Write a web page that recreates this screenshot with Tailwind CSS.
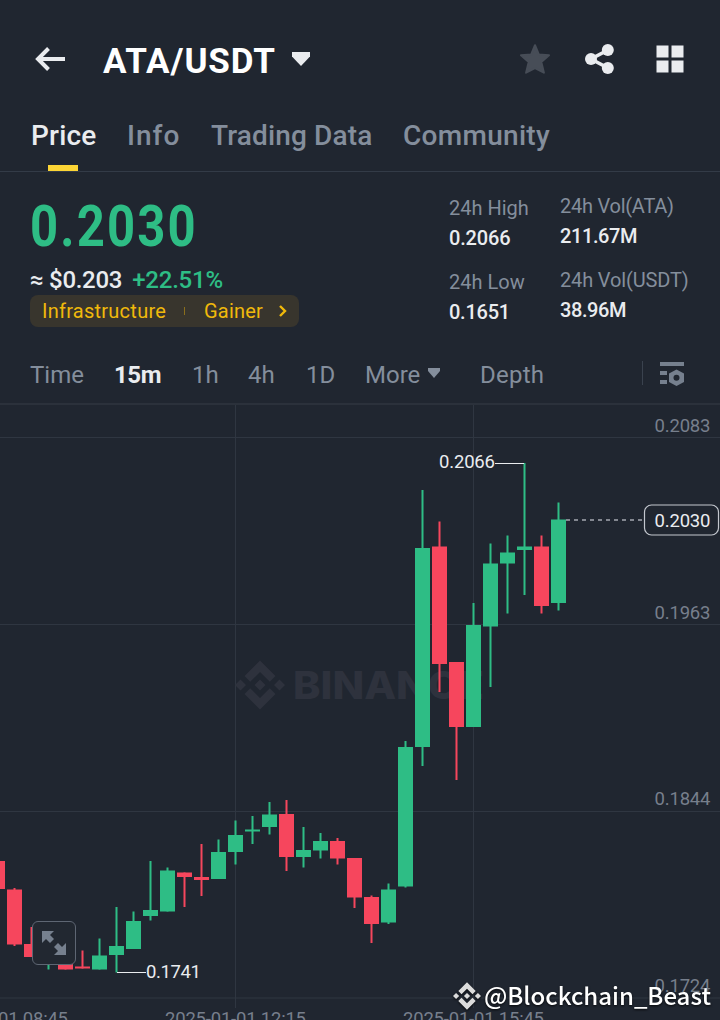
<!DOCTYPE html>
<html lang="en">
	<head>
		<meta charset="utf-8" />
		<title>ATA/USDT</title>
		<meta name="viewport" content="width=device-width, initial-scale=1.0" />
		<script src="https://cdn.jsdelivr.net/npm/@tailwindcss/browser@4"></script>
	</head>
	<body
		class="w-[720px] h-[1020px] overflow-hidden bg-[#202630] font-['Roboto',sans-serif] text-[#848e9c] whitespace-nowrap"
	>
		<header class="flex items-center h-[118px] pl-[35px] pr-9">
			<svg class="w-[30px] h-6" viewBox="0 0 30 24" fill="none" stroke="#eaecef" stroke-width="4">
				<path d="M30 12H4M13.500 1.500L3 12l10.500 10.500" />
			</svg>
			<h1 class="ml-[38px] mt-[5px] w-[172px] text-[35px] leading-none font-bold text-white tracking-[0.900px]">ATA/USDT</h1>
			<svg class="ml-[17px] w-[18px] h-[14px]" viewBox="0 0 18 14" fill="#eaecef">
				<path d="M0 0h18v4.500L9 14 0 4.500z" />
			</svg>
			<svg class="ml-auto w-[30px] h-[30px]" viewBox="0 0 30 30" fill="#474d57" stroke="#474d57" stroke-width="2" stroke-linejoin="round">
				<path d="M15 1.200l3.800 9.300 10.200.7-7.700 6.700 2.600 10.800L15 24.200l-8.900 4.500 2.600-10.800L1 11.200l10.200-.7z" />
			</svg>
			<svg class="ml-[35px] w-[29px] h-[30px]" viewBox="0 0 29 30" fill="#eaecef">
				<path d="M23 6L6 15l17 9" fill="none" stroke="#eaecef" stroke-width="3.600" />
				<circle cx="22.800" cy="6" r="6" />
				<circle cx="6" cy="15" r="6" />
				<circle cx="22.800" cy="24" r="6" />
			</svg>
			<svg class="ml-[42px] w-[28px] h-[28px]" viewBox="0 0 28 28" fill="#eaecef">
				<path d="M.500.500h12v12h-12zM15.500.500h12v12h-12zM.500 15.500h12v12h-12zM15.500 15.500h12v12h-12z" />
			</svg>
		</header>

		<nav class="flex h-[54px] pt-px pl-[31px] border-b border-[#333b47] text-[28px] leading-[34px] font-medium">
			<div class="relative w-[96px] text-[#eaecef] tracking-[0.200px]">
				Price
				<div class="absolute left-[17px] bottom-0 w-[30px] h-1.5 bg-[#fcd535]"></div>
			</div>
			<div class="w-[84px] tracking-[1px]">Info</div>
			<div class="w-[192px] tracking-[0.150px]">Trading Data</div>
			<div class="tracking-[0.300px]">Community</div>
		</nav>

		<section class="flex h-[167px] pl-[30px]">
			<div class="w-[419px] pt-[26px]">
				<div class="origin-left scale-x-[0.86] text-[57px] leading-[58px] font-bold text-[#2ebd85] tracking-[2.500px]">0.2030</div>
				<div class="flex gap-[10px] mt-[11px] h-7 text-2xl leading-[27px] font-medium text-[#eaecef]">
					<span class="tracking-[-0.300px]">≈ $0.203</span>
					<span class="text-[#2ebd85] tracking-[-0.200px]">+22.51%</span>
				</div>
				<div class="flex items-center w-[269px] h-8 pl-3 rounded-lg bg-[#38352d] text-xl text-[#f0b90b]">
					<span class="w-[142px] tracking-[0.250px]">Infrastructure</span>
					<span class="w-px h-2 bg-[#8a6e1c]"></span>
					<span class="ml-[19px] w-[59px] tracking-[0.200px]">Gainer</span>
					<svg class="ml-4 w-2 h-3" viewBox="0 0 8 12" fill="none" stroke="#f0b90b" stroke-width="2.400">
						<path d="M1 1l5 5-5 5" />
					</svg>
				</div>
			</div>
			<div class="w-[111px] pt-6 text-xl leading-6">
				<div>24h High</div>
				<div class="mt-1.5 font-medium text-[#eaecef] tracking-[-0.150px]">0.2066</div>
				<div class="mt-5">24h Low</div>
				<div class="mt-1.5 font-medium text-[#eaecef] tracking-[-0.250px]">0.1651</div>
			</div>
			<div class="pt-[22px] text-xl leading-6">
				<div class="tracking-[-0.250px]">24h Vol(ATA)</div>
				<div class="mt-1.5 font-medium text-[#eaecef] tracking-[-0.400px]">211.67M</div>
				<div class="mt-5 tracking-[-0.150px]">24h Vol(USDT)</div>
				<div class="mt-1.5 font-medium text-[#eaecef] tracking-[-0.400px]">38.96M</div>
			</div>
		</section>

		<div class="flex items-center h-[66px] pl-[30px] pt-2 border-b-2 border-[#2b313b] text-2xl">
			<span class="w-[84px]">Time</span>
			<span class="w-[78px] font-bold text-[#eaecef] tracking-[-0.400px]">15m</span>
			<span class="w-[56px]">1h</span>
			<span class="w-[58px]">4h</span>
			<span class="w-[59px]">1D</span>
			<span class="w-[63px]">More</span>
			<svg class="w-3 h-[10px] -mt-1" viewBox="0 0 12 10" fill="#848e9c"><path d="M0 0h12v3L6 10 0 3z" /></svg>
			<span class="ml-10 w-[162px] tracking-[0.250px]">Depth</span>
			<span class="w-px h-6 -mt-1 bg-[#3a424e]"></span>
			<svg class="ml-[17px] w-6 h-6 -mt-0.5" viewBox="0 0 24 24" fill="#76808e">
				<path d="M0 0h24v4H0zM0 9h7v4H0zM0 18h7v4H0z" />
				<path fill-rule="evenodd" d="M16.500 7.500l7.500 4v8.500l-7.500 4-7.500-4v-8.500zM16.500 12.800a3 3 0 100 6 3 3 0 000-6z" />
			</svg>
		</div>

		<main class="relative h-[615px]">
			<svg class="block w-[720px] h-[615px]" viewBox="0 405 720 615">
				<g stroke="#2f3641" stroke-width="1">
					<path d="M0 437.500h720M0 624.500h720M0 811.500h720M0 998h720" />
					<path d="M235.500 405v603M473.500 405v603" />
				</g>
				<g fill="#2e323d">
					<path d="M260 660.500l15.500 15.500-5.700 5.700-9.800-9.800-9.800 9.800-5.700-5.700zM260 709.500l15.500-15.500-5.700-5.700-9.800 9.800-9.800-9.800-5.700 5.700zM260 679.500l5.500 5.500-5.500 5.500-5.500-5.500zM240.500 679.500l5.500 5.500-5.500 5.500-5.500-5.500zM279.500 679.500l5.500 5.500-5.500 5.500-5.500-5.500z" />
					<text x="293" y="699" font-size="38" font-weight="800" font-family="Inter" textLength="191" lengthAdjust="spacingAndGlyphs">BINANCE</text>
				</g>
				<g id="candles"></g>
				<path d="M566 520h78" stroke="#a4a8b0" stroke-width="1.300" stroke-dasharray="4 4" />
				<path d="M495 463.500h29M117 972.500h29" stroke="#eaecef" stroke-width="1.200" />
				<g font-size="18.500" fill="#eaecef">
					<text x="439" y="468" textLength="56">0.2066</text>
					<text x="146" y="978" textLength="55">0.1741</text>
				</g>
				<rect x="644.500" y="505" width="74" height="30" rx="7" fill="#202630" stroke="#c3c7ce" stroke-width="1.200" />
				<text x="654.500" y="527" font-size="18.500" fill="#eaecef" textLength="56">0.2030</text>
				<g font-size="18.500" fill="#777f8c">
					<text x="654.500" y="432" textLength="56">0.2083</text>
					<text x="654.500" y="619" textLength="56">0.1963</text>
					<text x="654.500" y="805" textLength="56">0.1844</text>
					<text x="654.500" y="992" textLength="56">0.1724</text>
					<text x="-73" y="1025" textLength="141">2025-01-01 08:45</text>
					<text x="165" y="1025" textLength="141">2025-01-01 12:15</text>
					<text x="403" y="1025" textLength="141">2025-01-01 15:45</text>
				</g>
			</svg>

			<button class="absolute left-8 top-[516px] flex items-center justify-center size-11 rounded-md border border-[#5e6673] bg-[#222831]">
				<svg class="size-6" viewBox="0 0 24 24" fill="#76808e">
					<path d="M0 0h12L8 4l4 4-4 4-4-4-4 4zM24 24H12l4-4-4-4 4-4 4 4 4-4z" />
				</svg>
			</button>

			<div class="absolute left-[453px] top-[575px] flex items-center gap-[3px] h-8 text-white drop-shadow-[0_1px_1px_rgba(0,0,0,0.8)]">
				<svg class="size-7" viewBox="235 660 50 50" fill="#dcdcdc">
					<path d="M260 660.500l15.500 15.500-5.700 5.700-9.800-9.800-9.800 9.800-5.700-5.700zM260 709.500l15.500-15.500-5.700-5.700-9.800 9.800-9.800-9.800-5.700 5.700zM260 679.500l5.500 5.500-5.500 5.500-5.500-5.500zM240.500 679.500l5.500 5.500-5.500 5.500-5.500-5.500zM279.500 679.500l5.500 5.500-5.500 5.500-5.500-5.500z" />
				</svg>
				<span class="-mt-[3px] font-['Noto_Sans_CJK_SC',sans-serif] text-2xl leading-8 font-medium">@Blockchain_Beast</span>
			</div>
		</main>

		<script>
			// [rising, body top, body bottom, wick top, wick bottom]
			const candles = [
				[0, 861, 889, 861, 889],
				[0, 889.5, 944.5, 888, 946],
				[0, 944, 957, 927, 957],
				[1, 957, 963, 950, 969.5],
				[0, 958, 969.5, 958, 969.5],
				[0, 966.5, 968.5, 950.5, 968.5],
				[1, 955.5, 969.5, 938.5, 969.5],
				[1, 946, 955, 907, 972.5],
				[1, 921, 949, 911.5, 949],
				[1, 910, 916, 861, 920.5],
				[1, 870.5, 911.5, 867.5, 911.5],
				[0, 872.5, 877, 872.5, 907],
				[0, 877, 880, 844, 896],
				[1, 852, 879, 839.5, 879],
				[1, 835, 852, 820.5, 864.5],
				[1, 829.5, 831.5, 816, 844],
				[1, 814.5, 827, 802, 834.5],
				[0, 814, 857, 800, 871],
				[1, 850, 857, 827, 867.5],
				[1, 841, 850.5, 833, 858.5],
				[0, 841, 858.5, 838, 864.5],
				[0, 858, 897.5, 858, 908],
				[0, 897, 924, 895.5, 943],
				[1, 889.5, 922.5, 883.5, 924],
				[1, 747, 886.5, 741, 887.5],
				[1, 548, 747, 490, 766],
				[0, 546.5, 664, 521.5, 692],
				[0, 662, 727, 662, 780],
				[1, 625, 727, 603, 727],
				[1, 563.5, 626.5, 543.5, 687],
				[1, 552.5, 563.5, 535.5, 613.5],
				[1, 546.5, 550, 463, 595],
				[0, 546.5, 606, 535.5, 613.5],
				[1, 519.5, 603, 502.5, 610.5],
			]

			document.getElementById('candles').innerHTML = candles
				.map(([up, top, bottom, high, low], i) => {
					const x = -2.5 + i * 17
					return `<g fill="${up ? '#2ebd85' : '#f6465d'}">
						<rect x="${x - 1}" y="${high}" width="2" height="${low - high}" />
						<rect x="${x - 7.5}" y="${top}" width="15" height="${bottom - top}" />
					</g>`
				})
				.join('')
		</script>
	</body>
</html>
